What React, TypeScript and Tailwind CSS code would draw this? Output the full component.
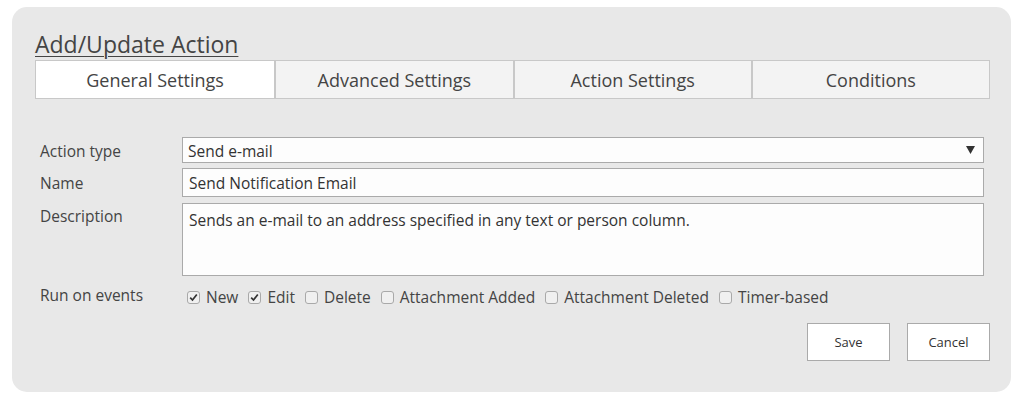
import { useState } from 'react';

const tabs = ['General Settings', 'Advanced Settings', 'Action Settings', 'Conditions'];

const events = [
  { label: 'New', checked: true },
  { label: 'Edit', checked: true },
  { label: 'Delete', checked: false },
  { label: 'Attachment Added', checked: false },
  { label: 'Attachment Deleted', checked: false },
  { label: 'Timer-based', checked: false },
];

function Check({ checked, onClick }: { checked: boolean; onClick: () => void }) {
  return (
    <span
      onClick={onClick}
      className="w-[13px] h-[13px] rounded-[3px] border border-[#a9a9a9] bg-[#f0f0f0] flex items-center justify-center cursor-pointer"
    >
      {checked && (
        <svg width="9" height="9" viewBox="0 0 9 9">
          <path d="M1.2 4.6 L3.5 7 L7.8 1.4" fill="none" stroke="#333" strokeWidth="1.7" />
        </svg>
      )}
    </span>
  );
}

export default function App() {
  const [active, setActive] = useState(0);
  const [checks, setChecks] = useState(events.map(e => e.checked));

  return (
    <div className="w-[1017px] h-[400px] bg-white pt-[7px] pl-[12px] font-['Open_Sans',sans-serif] text-[#444]">
      <div className="w-[999px] h-[385px] rounded-[15px] bg-[#e8e8e8] pl-[23px] pr-[21px] pt-[22px]">
        {/* Title */}
        <h1 className="text-[23px] leading-[30px] text-[#444] underline underline-offset-[3px] decoration-1">
          Add/Update Action
        </h1>

        {/* Tabs */}
        <div className="mt-[1px] grid grid-cols-4 h-[39px] border border-[#c8c8c8]">
          {tabs.map((t, i) => (
            <button
              key={t}
              onClick={() => setActive(i)}
              className={`text-[18px] text-[#444] pt-[1px] ${i > 0 ? 'border-l-2 border-[#c8c8c8]' : ''} ${active === i ? 'bg-white' : 'bg-[#f3f3f3]'}`}
            >
              {t}
            </button>
          ))}
        </div>

        {/* Form */}
        <div className="mt-[38px] pl-[5px] pr-[6px] text-[15.5px]">
          <div className="flex items-center h-[26px]">
            <label className="w-[142px] shrink-0 pt-[3px]">Action type</label>
            <div className="flex-1 h-[26px] border border-[#aaa] bg-[#fdfdfd] flex items-center justify-between pl-[5px] pr-[8px] text-[#333]">
              <span className="pt-[3px]">Send e-mail</span>
              <svg width="9" height="8" viewBox="0 0 9 8">
                <path d="M0 0 H9 L4.5 8 Z" fill="#333" />
              </svg>
            </div>
          </div>

          <div className="flex items-center h-[29px] mt-[5px]">
            <label className="w-[142px] shrink-0 pt-[3px]">Name</label>
            <div className="flex-1 h-[29px] border border-[#aaa] bg-[#fdfdfd] flex items-center pl-[6px] pt-[3px] text-[#333]">
              Send Notification Email
            </div>
          </div>

          <div className="flex mt-[6px]">
            <label className="w-[142px] shrink-0 pt-[2px]">Description</label>
            <div className="flex-1 h-[73px] border border-[#aaa] bg-[#fdfdfd] px-[6px] pt-[5px] text-[#333]">
              Sends an e-mail to an address specified in any text or person column.
            </div>
          </div>

          <div className="flex mt-[7px]">
            <label className="w-[142px] shrink-0 pt-[1px]">Run on events</label>
            <div className="flex items-center pt-[3px] pl-[5px]">
              {events.map((e, i) => (
                <div key={e.label} className="flex items-center mr-[10px]">
                  <Check
                    checked={checks[i]}
                    onClick={() => setChecks(c => c.map((v, j) => (j === i ? !v : v)))}
                  />
                  <span className="ml-[6px] text-[15.5px] text-[#444]">{e.label}</span>
                </div>
              ))}
            </div>
          </div>
        </div>

        {/* Buttons */}
        <div className="flex justify-end gap-[17px] mt-[14px]">
          <button className="w-[83px] h-[38px] border border-[#aaa] bg-white text-[13px] text-[#333]">Save</button>
          <button className="w-[83px] h-[38px] border border-[#aaa] bg-white text-[13px] text-[#333]">Cancel</button>
        </div>
      </div>
    </div>
  );
}
